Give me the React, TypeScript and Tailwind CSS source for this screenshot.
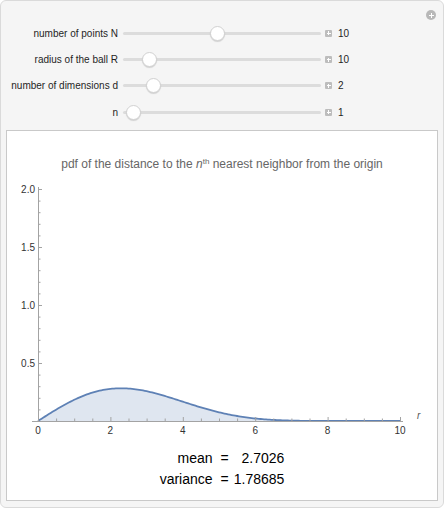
import React from "react";

const font = { fontFamily: '"Liberation Sans", Arial, sans-serif' };

const sliders = [
  { label: "number of points N", pos: 94, value: "10" },
  { label: "radius of the ball R", pos: 26, value: "10" },
  { label: "number of dimensions d", pos: 30, value: "2" },
  { label: "n", pos: 10, value: "1" },
];

// pdf of nearest-neighbour distance, N=10, R=10, d=2, n=1
const pdf = (r: number) => 0.2 * r * Math.pow(1 - (r * r) / 100, 9);

function SliderRow({ label, pos, value }: { label: string; pos: number; value: string }) {
  return (
    <div className="flex items-center h-[26.4px]">
      <div className="w-[112px] text-right text-[10px] text-[#1f1f1f] whitespace-nowrap">{label}</div>
      <div className="relative ml-[5px] w-[198px] h-[15px] flex items-center">
        <div className="w-full h-[3px] rounded-full bg-[#dcdcdc]" />
        <div
          className="absolute top-0 w-[15px] h-[15px] rounded-full bg-white border border-[#d2d2d2] shadow-[0_1px_1px_rgba(0,0,0,0.15)]"
          style={{ left: pos - 7.5 }}
        />
      </div>
      <div className="ml-[4px] w-[7px] h-[7px] rounded-[1px] bg-[#bdbdbd] relative">
        <div className="absolute left-[1.5px] top-[3px] w-[4px] h-[1px] bg-white" />
        <div className="absolute left-[3px] top-[1.5px] w-[1px] h-[4px] bg-white" />
      </div>
      <div className="ml-[6px] text-[10px] text-[#1f1f1f]">{value}</div>
    </div>
  );
}

function Chart() {
  const X0 = 31;
  const SX = 36.2;
  const Y0 = 243;
  const SY = 116;
  const px = (r: number) => X0 + r * SX;
  const py = (v: number) => Y0 - v * SY;

  const pts = Array.from({ length: 201 }, (_, i) => {
    const r = i * 0.05;
    return `${px(r).toFixed(2)},${py(pdf(r)).toFixed(2)}`;
  });
  const line = "M" + pts.join(" L");
  const area = `${line} L${px(10)},${Y0} L${px(0)},${Y0} Z`;

  const xMinor = Array.from({ length: 21 }, (_, i) => i * 0.5);
  const yMinor = Array.from({ length: 21 }, (_, i) => i * 0.1);
  const axis = "#a3a3a3";

  return (
    <svg width="429" height="262" className="block">
      <path d={area} fill="#5e81b5" fillOpacity={0.2} />
      <path d={line} fill="none" stroke="#5e81b5" strokeWidth={1.8} />

      <line x1={25} y1={Y0 + 0.5} x2={396} y2={Y0 + 0.5} stroke={axis} strokeWidth={1} />
      <line x1={X0 + 0.5} y1={py(2) - 2} x2={X0 + 0.5} y2={Y0} stroke={axis} strokeWidth={1} />

      {xMinor.map((r) => {
        const major = r % 2 === 0;
        return (
          <line
            key={"x" + r}
            x1={px(r) + 0.5}
            x2={px(r) + 0.5}
            y1={Y0}
            y2={Y0 - (major ? 4 : 2.5)}
            stroke={axis}
            strokeWidth={1}
          />
        );
      })}
      {yMinor.map((v, i) => {
        const major = i % 5 === 0;
        if (i === 0) return null;
        return (
          <line
            key={"y" + i}
            x1={X0}
            x2={X0 + (major ? 4 : 2.5)}
            y1={py(v) + 0.5}
            y2={py(v) + 0.5}
            stroke={axis}
            strokeWidth={1}
          />
        );
      })}

      {[0, 2, 4, 6, 8, 10].map((r) => (
        <text key={"xl" + r} x={px(r)} y={252} fontSize="10" fill="#333" textAnchor="middle" dominantBaseline="central" style={font}>
          {r}
        </text>
      ))}
      {["0.5", "1.0", "1.5", "2.0"].map((t) => (
        <text key={"yl" + t} x={28} y={py(parseFloat(t))} fontSize="10" fill="#333" textAnchor="end" dominantBaseline="central" style={font}>
          {t}
        </text>
      ))}
      <text x={410} y={241} fontSize="10" fill="#555" fontStyle="italic" style={font}>
        r
      </text>
    </svg>
  );
}

export default function App() {
  return (
    <div
      className="relative w-[444px] h-[508px] border border-[#dadada] rounded-[6px] bg-[#f5f5f5] px-[5px] pt-[19px]"
      style={font}
    >
      <div className="absolute right-[7px] top-[9px] w-[10px] h-[10px] rounded-full bg-[#b8b8b8]">
        <div className="absolute left-[2.5px] top-[4.5px] w-[5px] h-[1px] bg-white" />
        <div className="absolute left-[4.5px] top-[2.5px] w-[1px] h-[5px] bg-white" />
      </div>

      <div className="flex flex-col">
        {sliders.map((s) => (
          <SliderRow key={s.label} {...s} />
        ))}
      </div>

      <div className="mt-[4.5px] h-[371px] border border-[#c9c9c9] bg-white flex flex-col items-center">
        <div className="pt-[26px] text-[12px] leading-[14px] text-[#666] whitespace-nowrap">
          pdf of the distance to the <i>n</i>
          <sup className="text-[8px]">th</sup> nearest neighbor from the origin
        </div>
        <div className="mt-[7px] self-start">
          <Chart />
        </div>
        <div className="mt-[8px] grid grid-cols-[auto_auto_auto] text-[14px] leading-[21px] text-black">
          <div className="text-right">mean</div>
          <div className="pl-[8px] pr-[5px]">=</div>
          <div className="text-right">2.7026</div>
          <div className="text-right">variance</div>
          <div className="pl-[8px] pr-[5px]">=</div>
          <div className="text-right">1.78685</div>
        </div>
      </div>
    </div>
  );
}
